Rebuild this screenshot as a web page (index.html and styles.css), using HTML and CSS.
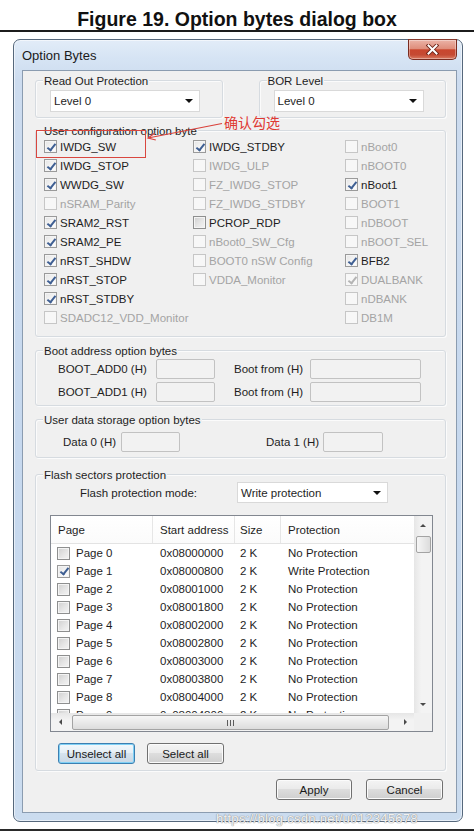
FILE: index.html
```html
<!DOCTYPE html>
<html>
<head>
<meta charset="utf-8">
<title>Option Bytes</title>
<link rel="stylesheet" href="styles.css">
</head>
<body>
<div class="page">
  <div class="fig-title">Figure 19. Option bytes dialog box</div>

  <div class="dialog">
    <div class="titlebar">
      <span class="tb-text">Option Bytes</span>
      <div class="close">
        <svg width="13" height="11" viewBox="0 0 13 11"><path d="M2.5 1.5 L10.5 9.5 M10.5 1.5 L2.5 9.5" stroke="#6e2418" stroke-width="3.8" stroke-linecap="square"/><path d="M2.5 1.5 L10.5 9.5 M10.5 1.5 L2.5 9.5" stroke="#fff" stroke-width="2" stroke-linecap="square"/></svg>
      </div>
    </div>

    <div class="client">
      <div class="row-top">
        <div class="group g-top">
          <div class="gtitle">Read Out Protection</div>
          <div class="combo c-top"><span>Level 0</span><i class="dd"></i></div>
        </div>
        <div class="group g-top">
          <div class="gtitle">BOR Level</div>
          <div class="combo c-top"><span>Level 0</span><i class="dd"></i></div>
        </div>
      </div>

      <div class="group g-user">
        <div class="gtitle">User configuration option byte</div>
        <div class="cb-cols">
          <div class="cb-col col1">
            <div class="cbr"><span class="cb on"></span>IWDG_SW</div>
            <div class="cbr"><span class="cb on"></span>IWDG_STOP</div>
            <div class="cbr"><span class="cb on"></span>WWDG_SW</div>
            <div class="cbr dis"><span class="cb"></span>nSRAM_Parity</div>
            <div class="cbr"><span class="cb on"></span>SRAM2_RST</div>
            <div class="cbr"><span class="cb on"></span>SRAM2_PE</div>
            <div class="cbr"><span class="cb on"></span>nRST_SHDW</div>
            <div class="cbr"><span class="cb on"></span>nRST_STOP</div>
            <div class="cbr"><span class="cb on"></span>nRST_STDBY</div>
            <div class="cbr dis"><span class="cb"></span>SDADC12_VDD_Monitor</div>
          </div>
          <div class="cb-col col2">
            <div class="cbr"><span class="cb on"></span>IWDG_STDBY</div>
            <div class="cbr dis"><span class="cb"></span>IWDG_ULP</div>
            <div class="cbr dis"><span class="cb"></span>FZ_IWDG_STOP</div>
            <div class="cbr dis"><span class="cb"></span>FZ_IWDG_STDBY</div>
            <div class="cbr"><span class="cb"></span>PCROP_RDP</div>
            <div class="cbr dis"><span class="cb"></span>nBoot0_SW_Cfg</div>
            <div class="cbr dis"><span class="cb"></span>BOOT0 nSW Config</div>
            <div class="cbr dis"><span class="cb"></span>VDDA_Monitor</div>
          </div>
          <div class="cb-col col3">
            <div class="cbr dis"><span class="cb"></span>nBoot0</div>
            <div class="cbr dis"><span class="cb"></span>nBOOT0</div>
            <div class="cbr"><span class="cb on"></span>nBoot1</div>
            <div class="cbr dis"><span class="cb"></span>BOOT1</div>
            <div class="cbr dis"><span class="cb"></span>nDBOOT</div>
            <div class="cbr dis"><span class="cb"></span>nBOOT_SEL</div>
            <div class="cbr"><span class="cb on"></span>BFB2</div>
            <div class="cbr dis"><span class="cb on"></span>DUALBANK</div>
            <div class="cbr dis"><span class="cb"></span>nDBANK</div>
            <div class="cbr dis"><span class="cb"></span>DB1M</div>
          </div>
        </div>
      </div>

      <div class="group g-boot">
        <div class="gtitle">Boot address option bytes</div>
        <div class="brow first">
          <span class="bl1">BOOT_ADD0 (H)</span><span class="tb tb-s"></span>
          <span class="bl2">Boot from (H)</span><span class="tb tb-l"></span>
        </div>
        <div class="brow">
          <span class="bl1">BOOT_ADD1 (H)</span><span class="tb tb-s"></span>
          <span class="bl2">Boot from (H)</span><span class="tb tb-l"></span>
        </div>
      </div>

      <div class="group g-data">
        <div class="gtitle">User data storage option bytes</div>
        <div class="drow">
          <span class="dl1">Data 0 (H)</span><span class="tb tb-s"></span>
          <span class="dl2">Data 1 (H)</span><span class="tb tb-d"></span>
        </div>
      </div>

      <div class="group g-flash">
        <div class="gtitle">Flash sectors protection</div>
        <div class="mode-row">
          <span class="mode-lbl">Flash protection mode:</span>
          <div class="combo c-mode"><span>Write protection</span><i class="dd"></i></div>
        </div>

        <div class="listbox">
          <div class="lv">
            <div class="lv-head">
              <div class="hc">Page</div>
              <div class="hc">Start address</div>
              <div class="hc hc-size">Size</div>
              <div class="hc last">Protection</div>
            </div>
            <div class="lv-row"><div class="pc"><span class="cb"></span>Page 0</div><div class="ac">0x08000000</div><div class="sc">2 K</div><div class="rc">No Protection</div></div>
            <div class="lv-row"><div class="pc"><span class="cb on"></span>Page 1</div><div class="ac">0x08000800</div><div class="sc">2 K</div><div class="rc">Write Protection</div></div>
            <div class="lv-row"><div class="pc"><span class="cb"></span>Page 2</div><div class="ac">0x08001000</div><div class="sc">2 K</div><div class="rc">No Protection</div></div>
            <div class="lv-row"><div class="pc"><span class="cb"></span>Page 3</div><div class="ac">0x08001800</div><div class="sc">2 K</div><div class="rc">No Protection</div></div>
            <div class="lv-row"><div class="pc"><span class="cb"></span>Page 4</div><div class="ac">0x08002000</div><div class="sc">2 K</div><div class="rc">No Protection</div></div>
            <div class="lv-row"><div class="pc"><span class="cb"></span>Page 5</div><div class="ac">0x08002800</div><div class="sc">2 K</div><div class="rc">No Protection</div></div>
            <div class="lv-row"><div class="pc"><span class="cb"></span>Page 6</div><div class="ac">0x08003000</div><div class="sc">2 K</div><div class="rc">No Protection</div></div>
            <div class="lv-row"><div class="pc"><span class="cb"></span>Page 7</div><div class="ac">0x08003800</div><div class="sc">2 K</div><div class="rc">No Protection</div></div>
            <div class="lv-row"><div class="pc"><span class="cb"></span>Page 8</div><div class="ac">0x08004000</div><div class="sc">2 K</div><div class="rc">No Protection</div></div>
            <div class="lv-row"><div class="pc"><span class="cb"></span>Page 9</div><div class="ac">0x08004800</div><div class="sc">2 K</div><div class="rc">No Protection</div></div>
          </div>
          <div class="vs">
            <div class="sb-btn"><i class="tri up"></i></div>
            <div class="vthumb"></div>
            <div class="sb-fill"></div>
            <div class="sb-btn"><i class="tri down"></i></div>
          </div>
          <div class="hs">
            <div class="sb-btn"><i class="tri left"></i></div>
            <div class="hthumb"><i class="grip"></i></div>
            <div class="sb-fill"></div>
            <div class="sb-btn"><i class="tri right"></i></div>
          </div>
          <div class="corner"></div>
        </div>

        <div class="btn-row">
          <div class="btn def">Unselect all</div>
          <div class="btn">Select all</div>
        </div>
      </div>

      <div class="footer">
        <div class="btn b-apply">Apply</div>
        <div class="btn">Cancel</div>
      </div>
    </div>
  </div>

  <div class="bottom-rule"></div>

  <div class="annot-box"></div>
  <svg class="annot-arrow" width="90" height="30" viewBox="140 115 90 30">
    <line x1="222" y1="123.5" x2="148" y2="138" stroke="#d9403a" stroke-width="1.2"/>
    <polyline points="154.6,133.2 148,138 155.8,140" fill="none" stroke="#d9403a" stroke-width="1.2"/>
  </svg>
  <div class="annot-text">确认勾选</div>
  <div class="watermark">https://blog.csdn.net/u012345678</div>
</div>
</body>
</html>
```
FILE: styles.css
```css
* { box-sizing: border-box; }

body {
  margin: 0;
  background: #ffffff;
  font-family: "Liberation Sans", Arial, sans-serif;
  font-size: 11.5px;
  color: #1e1e1e;
}

.page {
  position: relative;
  width: 474px;
  height: 837px;
  overflow: hidden;
}

.fig-title {
  height: 32px;
  padding-top: 8px;
  line-height: 22px;
  border-bottom: 2px solid #1c1c1c;
  text-align: center;
  font-weight: bold;
  font-size: 19.5px;
  color: #111;
}

.dialog {
  margin: 7px 0 0 13px;
  width: 450px;
  border: 1px solid #56687c;
  border-radius: 7px;
  background: linear-gradient(180deg, #e2ecf8 0px, #d6e4f4 18px, #cddcef 40px, #c6d8ee 400px, #cbdcef 100%);
  box-shadow: inset 0 0 0 1px rgba(255,255,255,0.55);
  padding: 0 5px 8px 8px;
}

.titlebar {
  height: 30px;
  display: flex;
  justify-content: space-between;
  align-items: center;
}

.tb-text {
  font-size: 13px;
  color: #1b1b1b;
}

.close {
  align-self: flex-start;
  margin-top: -1px;
  width: 49px;
  height: 21px;
  border: 1px solid #7a2c20;
  border-top-color: #8a3a2e;
  border-radius: 0 0 5px 5px;
  background: linear-gradient(180deg, #ebb3a7 0%, #df8e7c 45%, #c9462e 52%, #c54a33 78%, #d97a62 100%);
  box-shadow: inset 0 0 0 1px rgba(255,255,255,0.35);
  display: flex;
  align-items: center;
  justify-content: center;
}

.client {
  background: #f0f0f0;
  border: 1px solid #8b9cb0;
  padding: 0 10px 12px 12px;
}

/* group boxes */
.group {
  border: 1px solid #d6dbe0;
  border-radius: 3px;
  box-shadow: inset 1px 1px 0 #fbfbfb, 1px 1px 0 #fbfbfb;
}

.gtitle {
  width: fit-content;
  margin: -7px 0 0 7px;
  padding: 0 1px;
  height: 14px;
  line-height: 14px;
  background: #f0f0f0;
  color: #1e1e1e;
}

.row-top {
  display: flex;
  gap: 36px;
}

.g-top {
  flex: 1;
  margin-top: 9px;
  padding-bottom: 5px;
}

.combo {
  display: flex;
  align-items: center;
  justify-content: space-between;
  background: #fff;
  border: 1px solid #d9d9d9;
  padding: 0 6px 0 3px;
}

.c-top {
  margin: 2px 0 0 14px;
  width: 150px;
  height: 22px;
}

.dd {
  width: 0;
  height: 0;
  border-left: 4px solid transparent;
  border-right: 4px solid transparent;
  border-top: 4px solid #111;
}

/* user configuration */
.g-user {
  margin-top: 12px;
  padding-bottom: 9px;
}

.cb-cols {
  display: flex;
  margin-top: -1px;
  padding-left: 8px;
}

.col1 { width: 149px; }
.col2 { width: 152px; }
.col3 { flex: 1; }

.cbr {
  height: 19px;
  display: flex;
  align-items: center;
  gap: 3px;
  white-space: nowrap;
}

.cbr.dis { color: #a4a4a4; }

.cb {
  position: relative;
  flex: none;
  width: 13px;
  height: 13px;
  border: 1px solid #8e8f8f;
  background: linear-gradient(135deg, #cfcfcf 0%, #e6e6e6 55%, #f4f4f4 100%);
  box-shadow: inset 0 0 0 1px #f4f4f4;
}

.cb.on {
  border-color: #9a9a9a;
  background: linear-gradient(135deg, #e4e4e4 0%, #f6f6f6 60%, #ffffff 100%);
}

.cb.on::after {
  content: "";
  position: absolute;
  left: 3.5px;
  top: 0.5px;
  width: 3px;
  height: 7px;
  border: solid #3f5f93;
  border-width: 0 2px 2px 0;
  transform: rotate(38deg);
}

.dis .cb {
  border-color: #c6c6c6;
  background: #f7f7f7;
  box-shadow: none;
}

.dis .cb.on::after { border-color: #b4b4b4; }

/* boot address */
.g-boot {
  margin-top: 13px;
  padding: 0 0 3px 22px;
}

.g-boot .gtitle { margin-left: -15px; }

.brow {
  display: flex;
  align-items: center;
  height: 20px;
  margin-top: 3px;
}

.brow.first { margin-top: 1px; }

.bl1 { width: 98px; }
.bl2 { width: 76px; margin-left: 19px; }

.tb {
  height: 20px;
  border: 1px solid #c2c2c2;
  border-radius: 2px;
  background: #f2f2f2;
}

.tb-s { width: 59px; }
.tb-l { width: 111px; }
.tb-d { width: 60px; }

/* user data */
.g-data {
  margin-top: 13px;
  padding: 0 0 5px 27px;
}

.g-data .gtitle { margin-left: -20px; }

.drow {
  display: flex;
  align-items: center;
  height: 20px;
  margin-top: 5px;
}

.dl1 { width: 58px; }
.dl2 { width: 57px; margin-left: 86px; }

/* flash sectors */
.g-flash {
  margin-top: 16px;
  padding: 0 0 6px 14px;
}

.g-flash .gtitle { margin-left: -7px; }

.mode-row {
  display: flex;
  align-items: center;
  height: 21px;
  padding-left: 30px;
}

.mode-lbl { width: 157px; }

.c-mode {
  width: 151px;
  height: 21px;
}

.listbox {
  margin-top: 12px;
  width: 383px;
  height: 217px;
  border: 1px solid #828790;
  background: #fff;
  display: grid;
  grid-template-columns: 1fr 18px;
  grid-template-rows: 1fr 18px;
}

.lv { overflow: hidden; }

.lv-head,
.lv-row {
  display: grid;
  grid-template-columns: 102px 82px 46px 1fr;
  align-items: center;
  white-space: nowrap;
}

.lv-head {
  height: 28px;
  border-bottom: 1px solid #e3e3e3;
  background: linear-gradient(180deg, #ffffff 0%, #fbfbfb 100%);
}

.hc {
  height: 100%;
  display: flex;
  align-items: center;
  padding-left: 7px;
  border-right: 1px solid #e6e6e6;
}

.hc-size { padding-left: 5px; }
.hc.last { border-right: none; }

.lv-row { height: 18px; }

.pc {
  display: flex;
  align-items: center;
  gap: 6px;
  padding-left: 6px;
}

.ac { padding-left: 7px; }
.sc { padding-left: 5px; }
.rc { padding-left: 7px; }

.vs {
  display: flex;
  flex-direction: column;
  background: linear-gradient(90deg, #e6e6e6 0%, #f3f3f3 40%, #f3f3f3 100%);
}

.hs {
  display: flex;
  background: linear-gradient(180deg, #e6e6e6 0%, #f3f3f3 40%, #f3f3f3 100%);
}

.sb-btn {
  flex: none;
  width: 18px;
  height: 18px;
  display: flex;
  align-items: center;
  justify-content: center;
}

.sb-fill { flex: 1; }

.tri {
  width: 0;
  height: 0;
  border: 3px solid transparent;
}

.tri.up { border-bottom: 3px solid #4a4a4a; border-top-width: 0; }
.tri.down { border-top: 3px solid #4a4a4a; border-bottom-width: 0; }
.tri.left { border-right: 3px solid #4a4a4a; border-left-width: 0; }
.tri.right { border-left: 3px solid #4a4a4a; border-right-width: 0; }

.vthumb {
  flex: none;
  height: 17px;
  margin: 2px 1px 0 2px;
  border: 1px solid #a3a3a3;
  border-radius: 2px;
  background: linear-gradient(90deg, #f6f6f6 0%, #e9e9e9 50%, #dcdcdc 100%);
}

.hthumb {
  flex: none;
  width: 317px;
  margin: 2px 0 1px 3px;
  border: 1px solid #a3a3a3;
  border-radius: 2px;
  background: linear-gradient(180deg, #f6f6f6 0%, #e9e9e9 50%, #dcdcdc 100%);
  display: flex;
  align-items: center;
  justify-content: center;
}

.grip {
  width: 7px;
  height: 6px;
  background: repeating-linear-gradient(90deg, #5c5c5c 0 1px, transparent 1px 3px);
}

.corner { background: #f0f0f0; }

/* buttons */
.btn-row {
  display: flex;
  gap: 12px;
  margin: 11px 0 0 8px;
}

.btn {
  width: 77px;
  height: 21px;
  border: 1px solid #707070;
  border-radius: 3px;
  background: linear-gradient(180deg, #f4f4f4 0%, #ebebeb 45%, #dddddd 50%, #cfcfcf 100%);
  box-shadow: inset 0 0 0 1px #fbfbfb;
  display: flex;
  align-items: center;
  justify-content: center;
  color: #1a1a1a;
}

.btn.def {
  border-color: #3c7fb1;
  background: linear-gradient(180deg, #f2f8fc 0%, #e6eff6 45%, #d6e3ee 50%, #c9d7e4 100%);
  box-shadow: inset 0 0 0 1px #7fd0f5;
}

.footer {
  display: flex;
  justify-content: flex-end;
  gap: 14px;
  margin-top: 8px;
  padding-right: 3px;
}

.b-apply { width: 76px; }

.bottom-rule {
  margin-top: 7px;
  height: 2px;
  background: #2a2a2a;
}

/* annotation overlays */
.annot-box {
  position: absolute;
  left: 36px;
  top: 130px;
  width: 110px;
  height: 28px;
  border: 1.5px solid #d9473f;
}

.annot-arrow {
  position: absolute;
  left: 140px;
  top: 115px;
}

.annot-text {
  position: absolute;
  left: 224px;
  top: 113px;
  font-family: "Noto Sans CJK SC", sans-serif;
  font-size: 14px;
  line-height: 18px;
  color: #df3a33;
}

.watermark {
  position: absolute;
  left: 216px;
  top: 811px;
  font-size: 13px;
  line-height: 15px;
  letter-spacing: 0.3px;
  color: rgba(255,255,255,0.9);
  text-shadow: 0 0 1px #8a8a8a, 0 0 1px #8a8a8a;
}
```
